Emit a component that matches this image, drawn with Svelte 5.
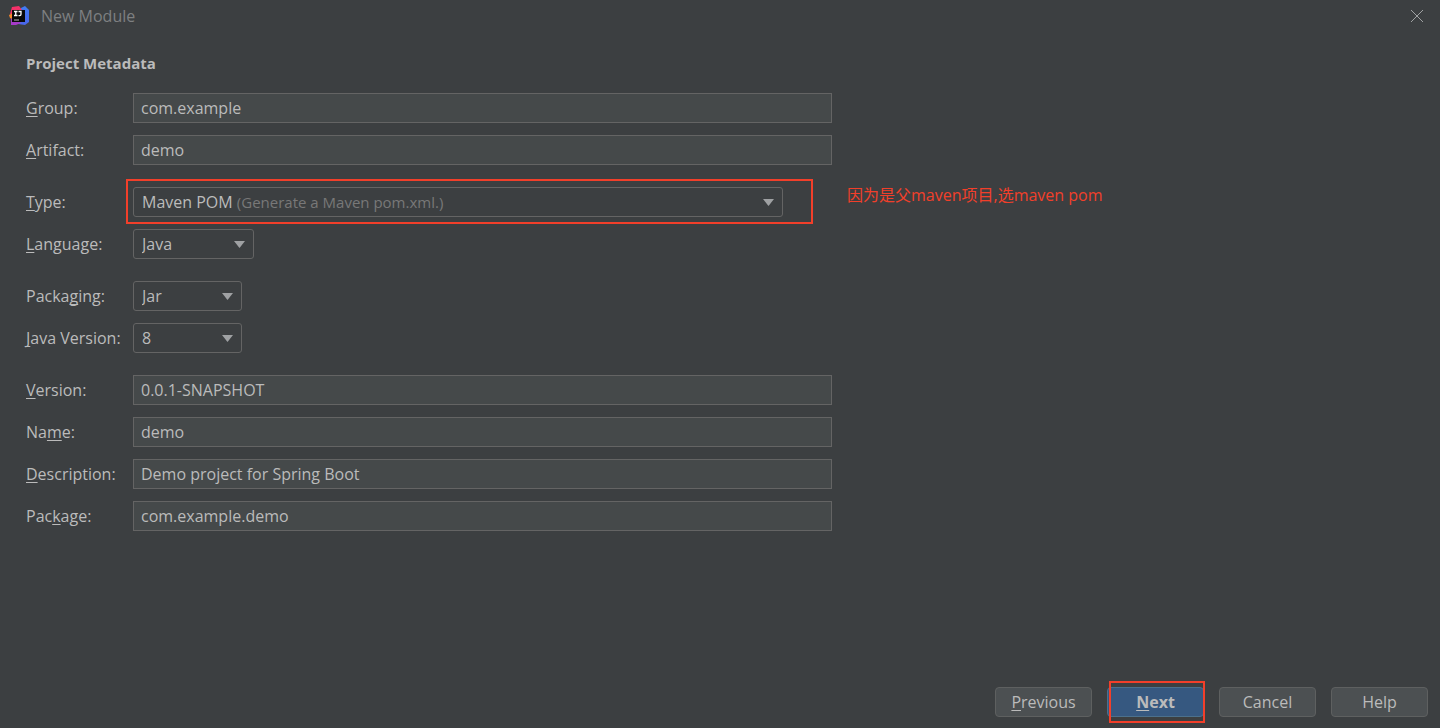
<script>
  // New Module wizard, project metadata step.
  let meta = $state({
    group: 'com.example',
    artifact: 'demo',
    type: 'Maven POM',
    language: 'Java',
    packaging: 'Jar',
    javaVersion: '8',
    version: '0.0.1-SNAPSHOT',
    name: 'demo',
    description: 'Demo project for Spring Boot',
    pkg: 'com.example.demo',
  });

  const HINTS = {
    'Maven POM': '(Generate a Maven pom.xml.)',
    'Maven Project': '(Generate a Maven based project archive.)',
  };

  // label = [before, mnemonic, after]
  const SECTIONS = [
    [
      { key: 'group', label: ['', 'G', 'roup:'] },
      { key: 'artifact', label: ['', 'A', 'rtifact:'] },
    ],
    [
      { key: 'type', label: ['', 'T', 'ype:'], options: Object.keys(HINTS), size: 'wide' },
      { key: 'language', label: ['', 'L', 'anguage:'], options: ['Java', 'Kotlin', 'Groovy'], size: 'medium' },
    ],
    [
      { key: 'packaging', label: ['Packa', 'g', 'ing:'], options: ['Jar', 'War'], size: 'small' },
      { key: 'javaVersion', label: ['', 'J', 'ava Version:'], options: ['8', '11', '17'], size: 'small' },
    ],
    [
      { key: 'version', label: ['', 'V', 'ersion:'] },
      { key: 'name', label: ['Na', 'm', 'e:'] },
      { key: 'description', label: ['', 'D', 'escription:'] },
      { key: 'pkg', label: ['Pac', 'k', 'age:'] },
    ],
  ];
</script>

<div class="dialog">
  <header class="titlebar">
    <svg class="logo" viewBox="0 0 20 20" aria-hidden="true">
      <defs>
        <linearGradient id="ij-blue" x1="0" y1="0" x2="0" y2="1">
          <stop offset="0" stop-color="#3f7cf4" />
          <stop offset="1" stop-color="#4a66ea" />
        </linearGradient>
        <linearGradient id="ij-pink" x1="0" y1="0" x2="1" y2="1">
          <stop offset="0" stop-color="#ff2f66" />
          <stop offset="1" stop-color="#e0336f" />
        </linearGradient>
      </defs>
      <path d="M12 2 16 0 20 4V16L16 19 9 18Z" fill="url(#ij-blue)" />
      <path d="M3 1 10 0 13 4 9 11 1 8Z" fill="url(#ij-pink)" />
      <path d="M0 9 4 7 5 14 1 12Z" fill="#f8882c" />
      <path d="M2 13 6 10 12 17 7 19 2 19Z" fill="#a63bc8" />
      <rect x="3" y="4" width="13" height="12" fill="#090909" />
      <path d="M5 5.5H8.5M6.75 5.5V9.5M5 9.5H8.5M9.5 5.5H12V8.2Q12 9.6 10.6 9.6H9.5" fill="none" stroke="#fff" stroke-width="1.3" />
      <path d="M5 14H10" stroke="#bbb" />
    </svg>
    <h1>New Module</h1>
    <button class="close" aria-label="Close">
      <svg viewBox="0 0 12 12" aria-hidden="true"><path d="M0 0 12 12M12 0 0 12" /></svg>
    </button>
  </header>

  <main>
    <h2>Project Metadata</h2>
    <form id="metadata" onsubmit={(e) => e.preventDefault()}>
      {#each SECTIONS as rows}
        <div class="section">
          {#each rows as row (row.key)}
            <div class="row">
              <label for={row.key}>{row.label[0]}<u>{row.label[1]}</u>{row.label[2]}</label>
              {#if row.options}
                <div class="combo {row.size}">
                  <select id={row.key} bind:value={meta[row.key]}>
                    {#each row.options as o}
                      <option value={o}>{o}</option>
                    {/each}
                  </select>
                  <svg class="arrow" viewBox="0 0 11 7" aria-hidden="true"><path d="M0 0H11L5.5 7Z" /></svg>
                  {#if row.key === 'type'}
                    <span class="hint"><span class="spacer">{meta.type}&nbsp;</span><small>{HINTS[meta.type]}</small></span>
                    <span class="mark" aria-hidden="true"></span>
                    <span class="note">因为是父maven项目,选maven pom</span>
                  {/if}
                </div>
              {:else}
                <input id={row.key} type="text" spellcheck="false" bind:value={meta[row.key]} />
              {/if}
            </div>
          {/each}
        </div>
      {/each}
    </form>
  </main>

  <footer>
    <button class="btn"><u>P</u>revious</button>
    <div class="next">
      <button class="btn primary" type="submit" form="metadata"><u>N</u>ext</button>
      <span class="mark" aria-hidden="true"></span>
    </div>
    <button class="btn">Cancel</button>
    <button class="btn">Help</button>
  </footer>
</div>

<style>
  :global(body) { background: #3c3f41; }

  .dialog { display: flex; flex-direction: column; box-sizing: border-box; min-height: 100vh;
    background: #3c3f41; color: #bbb;
    font: 16px/22px "Open Sans", "Noto Sans CJK SC", sans-serif; }

  .titlebar { display: flex; align-items: center; gap: 12px; height: 32px; padding: 0 17px 0 9px; }
  .logo { width: 20px; height: 20px; }
  h1 { flex: 1; margin: 0; font-size: 16px; font-weight: 400; color: #7e8081; }
  .close { display: flex; padding: 0; border: 0; background: none; cursor: pointer; }
  .close svg { width: 12px; height: 12px; overflow: visible; }
  .close path { stroke: #a0a2a3; fill: none; }

  main { flex: 1; padding: 20px 26px; }
  h2 { margin: 0 0 19px; font-size: 15px; line-height: 22px; font-weight: 700; }

  form { display: flex; flex-direction: column; gap: 22px; max-width: 806px; }
  .section { display: flex; flex-direction: column; gap: 12px; }
  .row { display: grid; grid-template-columns: 107px minmax(0, 1fr); align-items: center; }
  label { white-space: nowrap; }
  u { text-decoration: underline 1px; text-underline-offset: 2px; text-decoration-skip-ink: none; }

  input, select { box-sizing: border-box; width: 100%; height: 30px; margin: 0;
    border: 1px solid #646464; color: #bbb; font: inherit; outline: none; }
  input { padding: 0 7px; background: #45494a; }
  select { appearance: none; padding: 0 28px 0 8px; border-radius: 3px; background: #3c3f41; }
  input:focus, select:focus { border-color: #466d94; }

  .combo { position: relative; }
  .combo.wide { width: 650px; }
  .combo.medium { width: 121px; }
  .combo.small { width: 109px; }
  .arrow { position: absolute; right: 9px; top: 12px; width: 11px; height: 7px;
    fill: #9fa1a3; pointer-events: none; }
  .hint { position: absolute; left: 9px; top: 4px; color: #787878; white-space: nowrap; pointer-events: none; }
  .hint small { font-size: 15px; }
  .spacer { visibility: hidden; }

  /* red call-outs drawn over the dialog */
  .mark { position: absolute; inset: -8px -30px -7px -7px; border: 2px solid #f23f2a; pointer-events: none; }
  .note { position: absolute; left: 100%; top: -3px; margin-left: 64px; color: #f23f2a; white-space: nowrap; }

  footer { display: flex; justify-content: flex-end; gap: 15px; padding: 0 12px 11px; }
  .btn { box-sizing: border-box; width: 97px; height: 30px; padding: 0; border: 1px solid #5e6060;
    border-radius: 4px; background: #4c5052; color: #bbb; font: inherit; cursor: pointer; }
  .btn.primary { border-color: #4c708c; background: #365880; font-weight: 700; }
  .next { position: relative; }
  .next .mark { inset: -6px -1px -6px 2px; }
</style>
